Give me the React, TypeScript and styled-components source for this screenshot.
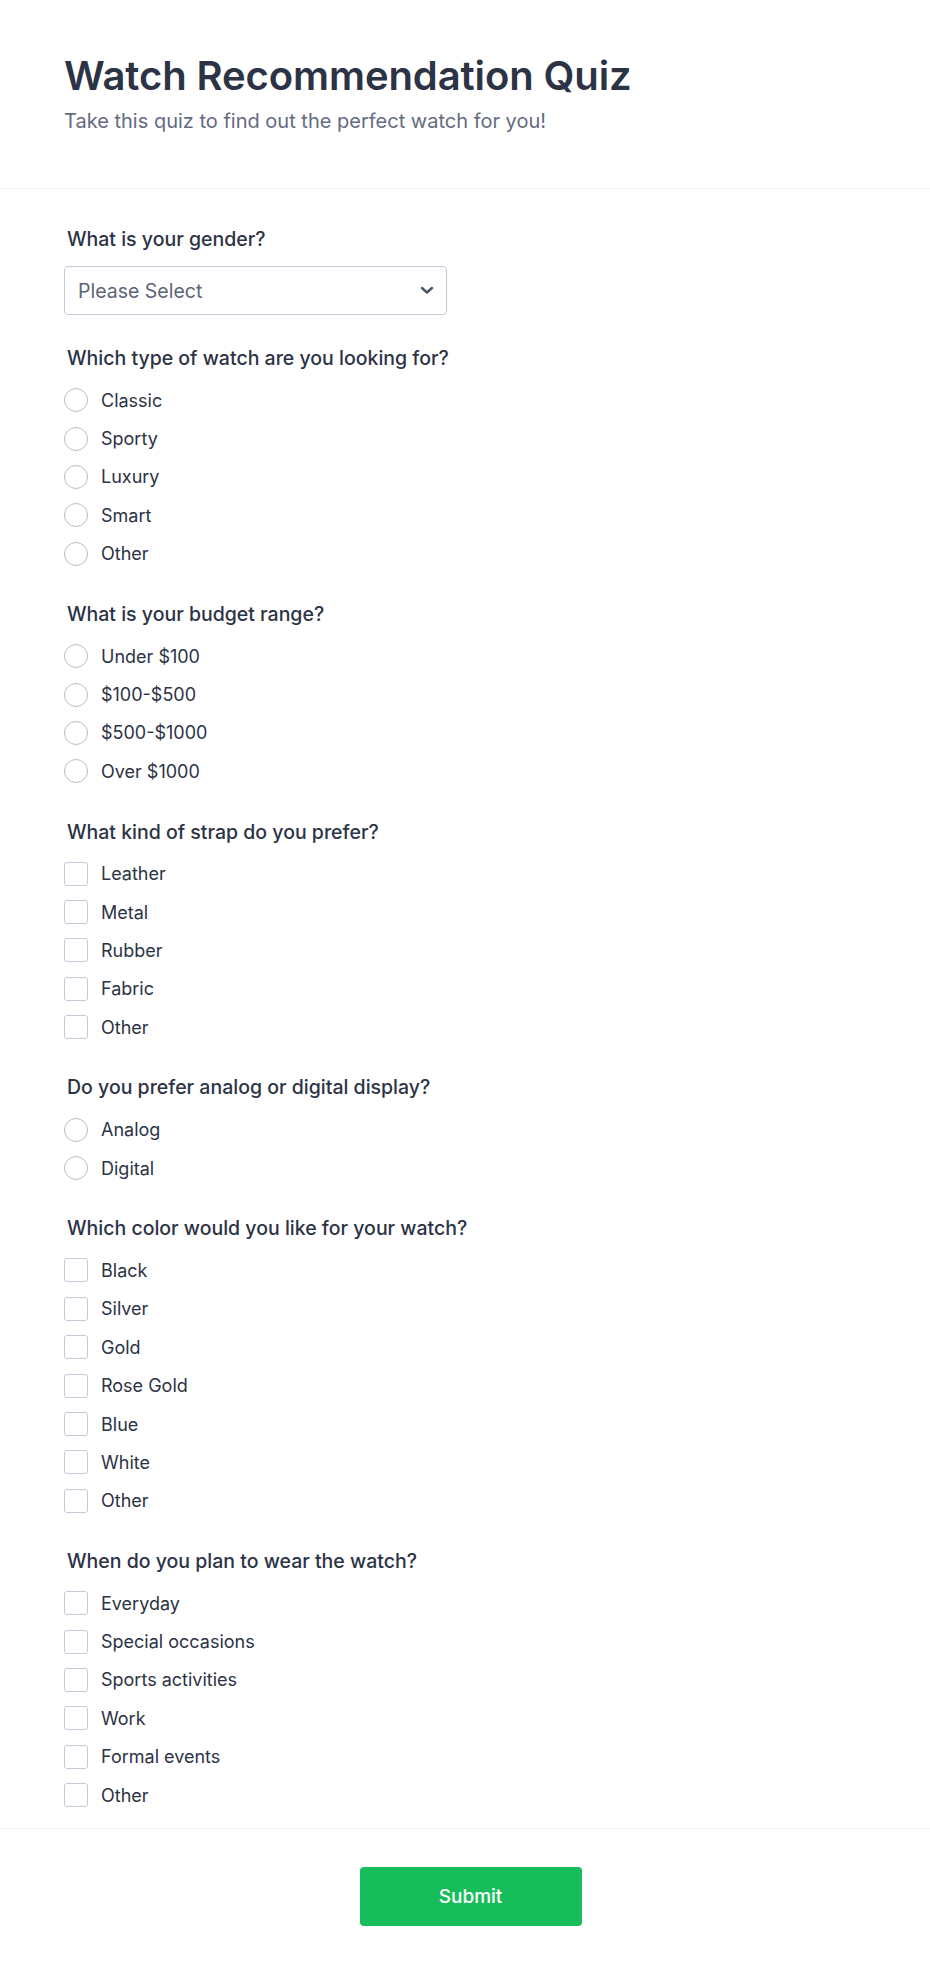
import * as React from 'react'
import styled, { createGlobalStyle } from 'styled-components'

type Kind = 'radio' | 'checkbox'
type Question = { title: string, kind: Kind, options: string[] }

const questions: Question[] = [
    { title: 'Which type of watch are you looking for?', kind: 'radio', options: ['Classic', 'Sporty', 'Luxury', 'Smart', 'Other'] },
    { title: 'What is your budget range?', kind: 'radio', options: ['Under $100', '$100-$500', '$500-$1000', 'Over $1000'] },
    { title: 'What kind of strap do you prefer?', kind: 'checkbox', options: ['Leather', 'Metal', 'Rubber', 'Fabric', 'Other'] },
    { title: 'Do you prefer analog or digital display?', kind: 'radio', options: ['Analog', 'Digital'] },
    { title: 'Which color would you like for your watch?', kind: 'checkbox', options: ['Black', 'Silver', 'Gold', 'Rose Gold', 'Blue', 'White', 'Other'] },
    { title: 'When do you plan to wear the watch?', kind: 'checkbox', options: ['Everyday', 'Special occasions', 'Sports activities', 'Work', 'Formal events', 'Other'] },
]

const GlobalStyle = createGlobalStyle`
    html, body {
        margin: 0;
        padding: 0;
        background: #fff;
    }
    body {
        font-family: Inter, "Noto Sans", "Liberation Sans", sans-serif;
        color: #2c3345;
    }
    * { box-sizing: border-box; }
`

const Page = styled('div')`
    width: 930px;
    min-height: 1975px;
    background: #fff;
`

const Header = styled('header')`
    padding: 54px 64px 54px;
    border-bottom: 1px solid #f3f4f6;
`

const Title = styled('h1')`
    margin: 0;
    font-size: 40px;
    line-height: 44px;
    font-weight: 600;
    color: #2c3345;
    letter-spacing: -0.1px;
`

const Subtitle = styled('p')`
    margin: 11px 0 0;
    font-size: 20px;
    line-height: 25px;
    color: #646b80;
`

const Form = styled('form')`
    padding: 38px 64px 14px;
    border-bottom: 1px solid #f3f4f6;
`

const Field = styled('div')<{ $gap: number }>`
    margin-bottom: ${p => p.$gap}px;
    &:last-child { margin-bottom: 0; }
`

const Label = styled('div')<{ $space: number }>`
    padding-left: 3px;
    font-size: 19.5px;
    line-height: 24px;
    font-weight: 500;
    color: #2c3345;
    margin-bottom: ${p => p.$space}px;
`

const SelectBox = styled('div')`
    width: 383px;
    height: 49px;
    border: 1px solid #c3cad8;
    border-radius: 4px;
    display: flex;
    align-items: center;
    justify-content: space-between;
    padding: 0 12px 0 13px;
    font-size: 19.5px;
    color: #5e6477;
`

const Options = styled('div')`
    display: flex;
    flex-direction: column;
`

const OptionRow = styled('label')`
    height: 38.4px;
    display: flex;
    align-items: center;
    gap: 13px;
    font-size: 18px;
    color: #2c3345;
`

const Control = styled('span')<{ $kind: Kind }>`
    width: 24px;
    height: 24px;
    flex: none;
    border: 1px solid ${p => (p.$kind === 'radio' ? '#b8bdc9' : '#c3cad8')};
    border-radius: ${p => (p.$kind === 'radio' ? '50%' : '3px')};
    background: #fff;
`

const Footer = styled('div')`
    display: flex;
    justify-content: center;
    padding: 38px 0 48px 11px;
`

const SubmitButton = styled('button')`
    width: 222px;
    height: 59px;
    border: none;
    border-radius: 4px;
    background: #18bd5b;
    color: #fff;
    font-family: inherit;
    font-size: 19px;
    font-weight: 500;
    cursor: pointer;
`

const Chevron = () => (
    <svg width="14" height="9" viewBox="0 0 14 9" fill="none">
        <path d="M2 2l5 4.5L12 2" stroke="#4b5368" strokeWidth="2.4" strokeLinecap="round" strokeLinejoin="round" />
    </svg>
)

export default function App() {
    return (
        <Page>
            <GlobalStyle />
            <Header>
                <Title>Watch Recommendation Quiz</Title>
                <Subtitle>Take this quiz to find out the perfect watch for you!</Subtitle>
            </Header>
            <Form onSubmit={e => e.preventDefault()}>
                <Field $gap={31}>
                    <Label $space={15}>What is your gender?</Label>
                    <SelectBox>
                        <span>Please Select</span>
                        <Chevron />
                    </SelectBox>
                </Field>
                {questions.map(q => (
                    <Field key={q.title} $gap={29}>
                        <Label $space={11}>{q.title}</Label>
                        <Options>
                            {q.options.map(o => (
                                <OptionRow key={o}>
                                    <Control $kind={q.kind} />
                                    {o}
                                </OptionRow>
                            ))}
                        </Options>
                    </Field>
                ))}
            </Form>
            <Footer>
                <SubmitButton type="submit">Submit</SubmitButton>
            </Footer>
        </Page>
    )
}
